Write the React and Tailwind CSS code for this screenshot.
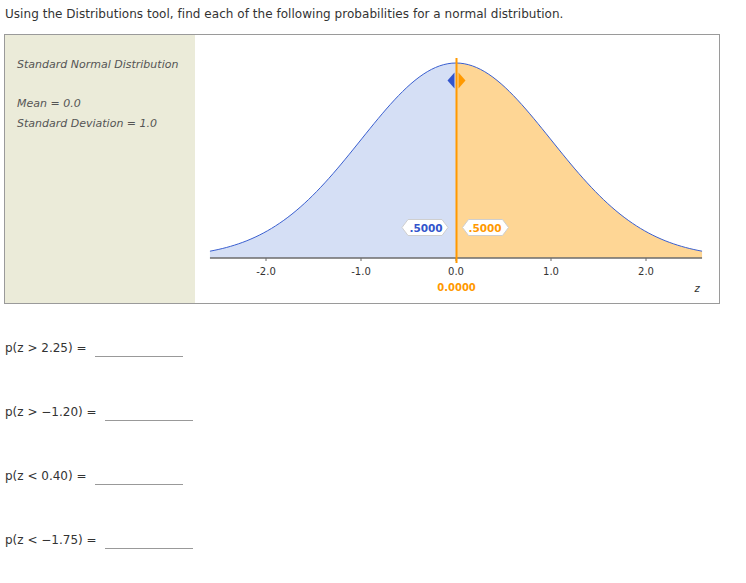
import React from 'react';

const font = { fontFamily: '"DejaVu Sans", Verdana, sans-serif' };

// chart geometry (svg coords inside the white panel)
const X0 = 261;
const UNIT = 95;
const BASE = 223;
const PEAK = 195;
const ZMIN = -2.59;
const ZMAX = 2.59;

const zx = (z) => X0 + z * UNIT;
const zy = (z) => BASE - PEAK * Math.exp(-(z * z) / 2);

const curvePoints = (from, to) => {
    const pts = [];
    const steps = 120;
    for (let i = 0; i <= steps; i++) {
        const z = from + ((to - from) * i) / steps;
        pts.push(`${zx(z).toFixed(2)},${zy(z).toFixed(2)}`);
    }
    return pts;
};

const hexagon = (cx, cy, w, h) => {
    const a = w / 2;
    const b = h / 2;
    const k = 6;
    return `${cx - a + k},${cy - b} ${cx + a - k},${cy - b} ${cx + a},${cy} ${cx + a - k},${cy + b} ${cx - a + k},${cy + b} ${cx - a},${cy}`;
};

const Chart = () => {
    const left = curvePoints(ZMIN, 0);
    const right = curvePoints(0, ZMAX);
    const full = curvePoints(ZMIN, ZMAX);
    const ticks = [-2, -1, 0, 1, 2];

    return (
        <svg width="523" height="268" viewBox="0 0 523 268" className="block">
            <polygon points={`${zx(ZMIN)},${BASE} ${left.join(' ')} ${X0},${BASE}`} fill="#d5dff5" />
            <polygon points={`${X0},${BASE} ${right.join(' ')} ${zx(ZMAX)},${BASE}`} fill="#fed695" />
            <polyline points={full.join(' ')} fill="none" stroke="#3a5fd0" strokeWidth="1" />
            <line x1={zx(ZMIN)} y1={BASE} x2={zx(ZMAX)} y2={BASE} stroke="#6b6b6b" strokeWidth="1.5" />
            {ticks.map((t) => (
                <g key={t}>
                    <line x1={zx(t)} y1={BASE} x2={zx(t)} y2={BASE + 3} stroke="#6b6b6b" strokeWidth="1" />
                    <text x={zx(t)} y={240} textAnchor="middle" fontSize="10" fill="#333" style={font}>
                        {t.toFixed(1)}
                    </text>
                </g>
            ))}

            {/* value labels */}
            <polygon points={hexagon(230, 192.5, 46, 16)} fill="#fff" stroke="#cfcfcf" strokeWidth="1" />
            <text x={231} y={196.5} textAnchor="middle" fontSize="10.5" fontWeight="bold" fill="#3355cc" style={font}>.5000</text>
            <polygon points={hexagon(290.5, 192.5, 46, 16)} fill="#fff" stroke="#cfcfcf" strokeWidth="1" />
            <text x={290} y={196.5} textAnchor="middle" fontSize="10.5" fontWeight="bold" fill="#ff9900" style={font}>.5000</text>

            {/* cutoff line + handles */}
            <line x1={X0 + 0.5} y1={23} x2={X0 + 0.5} y2={228} stroke="#ff9900" strokeWidth="2" />
            <polygon points="259.5,37.5 252.5,45.5 259.5,53.5" fill="#3355cc" />
            <polygon points="263.5,37.5 270.5,45.5 263.5,53.5" fill="#ff9900" />

            <text x={X0 + 0.5} y={256} textAnchor="middle" fontSize="10" fontWeight="bold" fill="#ff9900" style={font}>0.0000</text>
            <text x={502} y={257} textAnchor="middle" fontSize="10" fontStyle="italic" fill="#333" style={font}>z</text>
        </svg>
    );
};

const Question = ({ label }) => (
    <div className="flex h-[64px] items-start">
        <div className="flex h-[18px] items-center text-[12px] text-[#333]">
            <span>{label}</span>
            <span className="ml-[8px] h-[18px] w-[88px] border-b border-[#999]" />
        </div>
    </div>
);

export default function App() {
    return (
        <div className="min-h-[583px] w-[746px] bg-white" style={font}>
            <p className="pl-[5px] pt-[5px] text-[12px] leading-[18px] tracking-[0.04px] text-[#333]">
                Using the Distributions tool, find each of the following probabilities for a normal distribution.
            </p>

            <div className="ml-[4px] mt-[11px] flex h-[270px] w-[716px] border border-[#9a9a9a]">
                <div className="w-[190px] bg-[#ebebd9] pl-[12px] pt-[22px] text-[11px] italic text-[#555]">
                    <div className="leading-[16px]">Standard Normal Distribution</div>
                    <div className="mt-[23px] leading-[16px]">Mean = 0.0</div>
                    <div className="mt-[4px] leading-[16px]">Standard Deviation = 1.0</div>
                </div>
                <div className="flex-1 bg-white">
                    <Chart />
                </div>
            </div>

            <div className="mt-[35px] pl-[5px]">
                <Question label="p(z > 2.25) =" />
                <Question label="p(z > −1.20) =" />
                <Question label="p(z < 0.40) =" />
                <Question label="p(z < −1.75) =" />
            </div>
        </div>
    );
}
